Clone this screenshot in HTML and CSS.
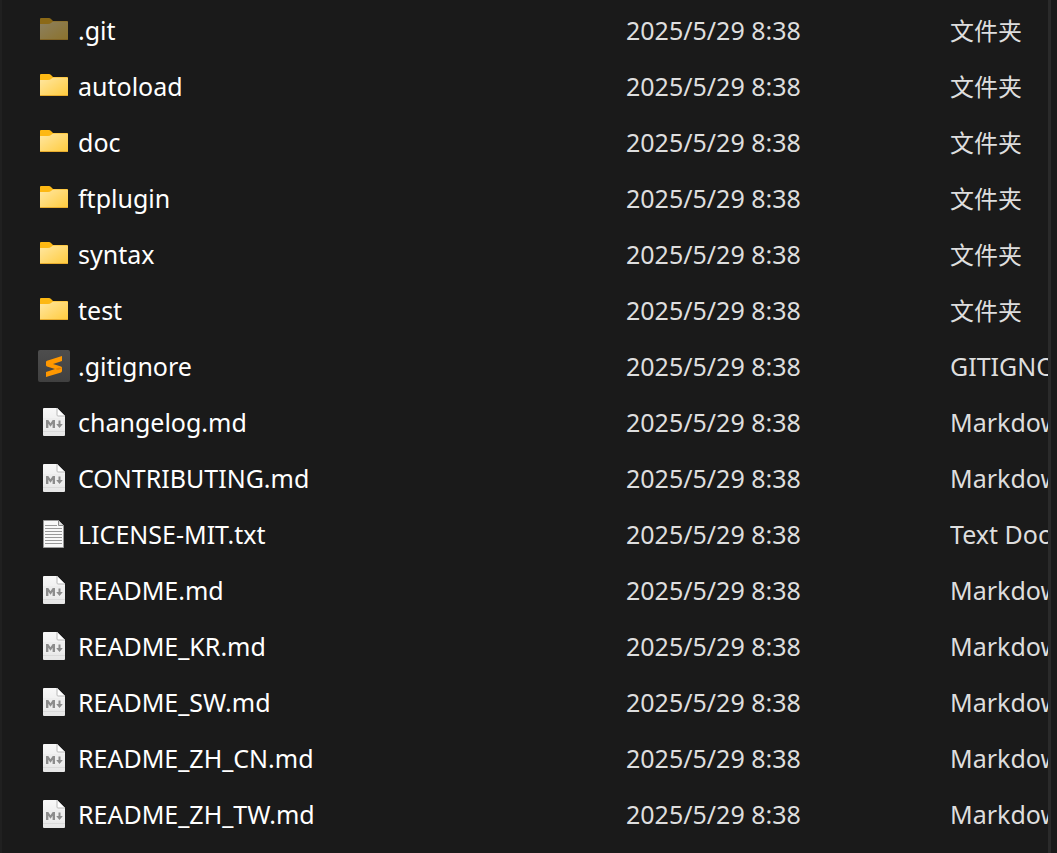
FILE: index.html
```
<!DOCTYPE html>
<html lang="zh-CN">
<head>
  <meta charset="UTF-8" />
  <meta name="viewport" content="width=device-width, initial-scale=1" />
  <title>文件列表</title>
  <link rel="stylesheet" href="styles.css">
</head>
<body>

<!-- file icons -->
<svg class="sprite" aria-hidden="true">
  <defs>
    <linearGradient id="folderFront" x1="0" y1="0" x2="1" y2="1">
      <stop offset="0" stop-color="#ffe7a2" />
      <stop offset="1" stop-color="#ffcb3d" />
    </linearGradient>
    <linearGradient id="hiddenFront" x1="0" y1="0" x2="1" y2="1">
      <stop offset="0" stop-color="#8c8060" />
      <stop offset="1" stop-color="#8c722b" />
    </linearGradient>
    <linearGradient id="tile" x1="0" y1="0" x2="0" y2="1">
      <stop offset="0" stop-color="#4d4d4d" />
      <stop offset="1" stop-color="#404040" />
    </linearGradient>
    <linearGradient id="paper" x1="0" y1="0" x2="0" y2="1">
      <stop offset="0" stop-color="#f8f8f8" />
      <stop offset="1" stop-color="#e6e6e6" />
    </linearGradient>
  </defs>
  <symbol id="folder" viewBox="0 0 32 32">
    <path d="M2 5q0-1 1-1h8q1 0 2 1l2 2h14q1 0 1 1v6H2z" fill="#fdb813" />
    <path d="M2 10h8q2 0 3-1l2-1.500h14q1 0 1 1v16.500q0 1-1 1H3q-1 0-1-1z" fill="url(#folderFront)" />
    <path d="M2 25h28q0 1-1 1H3q-1 0-1-1z" fill="#e8ac2e" />
  </symbol>
  <symbol id="folder-hidden" viewBox="0 0 32 32">
    <path d="M2 5q0-1 1-1h8q1 0 2 1l2 2h14q1 0 1 1v6H2z" fill="#8b6917" />
    <path d="M2 10h8q2 0 3-1l2-1.500h14q1 0 1 1v16.500q0 1-1 1H3q-1 0-1-1z" fill="url(#hiddenFront)" />
    <path d="M2 25h28q0 1-1 1H3q-1 0-1-1z" fill="#816324" />
  </symbol>
  <symbol id="sublime" viewBox="0 0 32 32">
    <rect width="32" height="32" rx="2" fill="url(#tile)" />
    <path d="M8 12q0-1 1-1.300L24 6v5l-9 3 8 2.500q1 .4 1 1.500v3q0 1-1 1.400L8 27v-5l9-3-8-2.500q-1-.4-1-1.500z" fill="#ff9800" />
    <path d="M17 19l4-1.500 3 1L20 20z" fill="#e47f00" />
  </symbol>
  <symbol id="markdown" viewBox="0 0 32 32">
    <path d="M5 3q0-1 1-1h13l8 8v19q0 1-1 1H6q-1 0-1-1z" fill="url(#paper)" />
    <path d="M5 12h22v11H5z" fill="#ededed" />
    <path d="M5 25.500h22" stroke="#dadada" />
    <path d="M19 2v7q0 1 1 1h7z" fill="#fff" />
    <path d="M19 2v7q0 1 1 1h7" fill="none" stroke="#b8b8b8" />
    <path d="M8 22v-8h2.300l2.200 3.200 2.200-3.200H17v8h-2.400v-4.300l-2.100 3-2.100-3V22z" fill="#8c8c8c" />
    <path d="M20.500 14.500h2v3.500h2.300l-3.300 4-3.300-4h2.300z" fill="#8c8c8c" />
  </symbol>
  <symbol id="text" viewBox="0 0 32 32">
    <path d="M5.500 2.500h15l5 5v22h-20z" fill="#f8f8f8" stroke="#999" />
    <path d="M20.500 2.500v5h5" fill="#ddd" stroke="#888" />
    <path d="M7 7.500h12M7 10.500h17M7 13.500h17M7 16.500h17M7 19.500h17M7 22.500h17M7 25.500h17" stroke="#999" />
  </symbol>
</svg>

<main class="pane">
  <table class="files">
    <colgroup>
      <col class="col-name">
      <col class="col-date">
      <col class="col-type">
    </colgroup>
    <tbody>
      <tr><td><div class="name"><svg class="icon"><use href="#folder-hidden" /></svg>.git</div></td><td>2025/5/29 8:38</td><td class="cjk">文件夹</td></tr>
      <tr><td><div class="name"><svg class="icon"><use href="#folder" /></svg>autoload</div></td><td>2025/5/29 8:38</td><td class="cjk">文件夹</td></tr>
      <tr><td><div class="name"><svg class="icon"><use href="#folder" /></svg>doc</div></td><td>2025/5/29 8:38</td><td class="cjk">文件夹</td></tr>
      <tr><td><div class="name"><svg class="icon"><use href="#folder" /></svg>ftplugin</div></td><td>2025/5/29 8:38</td><td class="cjk">文件夹</td></tr>
      <tr><td><div class="name"><svg class="icon"><use href="#folder" /></svg>syntax</div></td><td>2025/5/29 8:38</td><td class="cjk">文件夹</td></tr>
      <tr><td><div class="name"><svg class="icon"><use href="#folder" /></svg>test</div></td><td>2025/5/29 8:38</td><td class="cjk">文件夹</td></tr>
      <tr><td><div class="name"><svg class="icon"><use href="#sublime" /></svg>.gitignore</div></td><td>2025/5/29 8:38</td><td>GITIGNORE</td></tr>
      <tr><td><div class="name"><svg class="icon"><use href="#markdown" /></svg>changelog.md</div></td><td>2025/5/29 8:38</td><td>Markdown</td></tr>
      <tr><td><div class="name"><svg class="icon"><use href="#markdown" /></svg>CONTRIBUTING.md</div></td><td>2025/5/29 8:38</td><td>Markdown</td></tr>
      <tr><td><div class="name"><svg class="icon"><use href="#text" /></svg>LICENSE-MIT.txt</div></td><td>2025/5/29 8:38</td><td>Text Document</td></tr>
      <tr><td><div class="name"><svg class="icon"><use href="#markdown" /></svg>README.md</div></td><td>2025/5/29 8:38</td><td>Markdown</td></tr>
      <tr><td><div class="name"><svg class="icon"><use href="#markdown" /></svg>README_KR.md</div></td><td>2025/5/29 8:38</td><td>Markdown</td></tr>
      <tr><td><div class="name"><svg class="icon"><use href="#markdown" /></svg>README_SW.md</div></td><td>2025/5/29 8:38</td><td>Markdown</td></tr>
      <tr><td><div class="name"><svg class="icon"><use href="#markdown" /></svg>README_ZH_CN.md</div></td><td>2025/5/29 8:38</td><td>Markdown</td></tr>
      <tr><td><div class="name"><svg class="icon"><use href="#markdown" /></svg>README_ZH_TW.md</div></td><td>2025/5/29 8:38</td><td>Markdown</td></tr>
    </tbody>
  </table>
</main>

</body>
</html>
```
FILE: styles.css
```
* {
  box-sizing: border-box;
}
body {
  margin: 0;
  min-height: 100vh;
  display: flex;
  padding-right: 6px;
  background: #1a1a1a;
  color: #dedede;
  font-family: "Noto Sans", "Noto Sans CJK SC", sans-serif;
  font-size: 25px;
  line-height: 32px;
}
/* not display: none, the gradients would stop working */
.sprite {
  width: 0;
  height: 0;
  flex: none;
}
.pane {
  flex: 1;
  min-width: 0;
  padding-top: 2px;
  overflow: hidden;
  border-left: 2px solid #202020;
  border-right: 3px solid #2a2a2a;
}
.files {
  width: 100%;
  table-layout: fixed;
  border-collapse: collapse;
}
.col-name {
  width: 624px;
}
.col-date {
  width: 324px;
}
td {
  height: 56px;
  padding: 0;
  overflow: hidden;
  white-space: nowrap;
}
.name {
  display: flex;
  align-items: center;
  gap: 8px;
  padding-left: 36px;
  color: #fff;
}
.icon {
  width: 32px;
  height: 32px;
  flex: none;
}
.cjk {
  font-family: "Noto Sans CJK SC", sans-serif;
  font-size: 24px;
}
```
